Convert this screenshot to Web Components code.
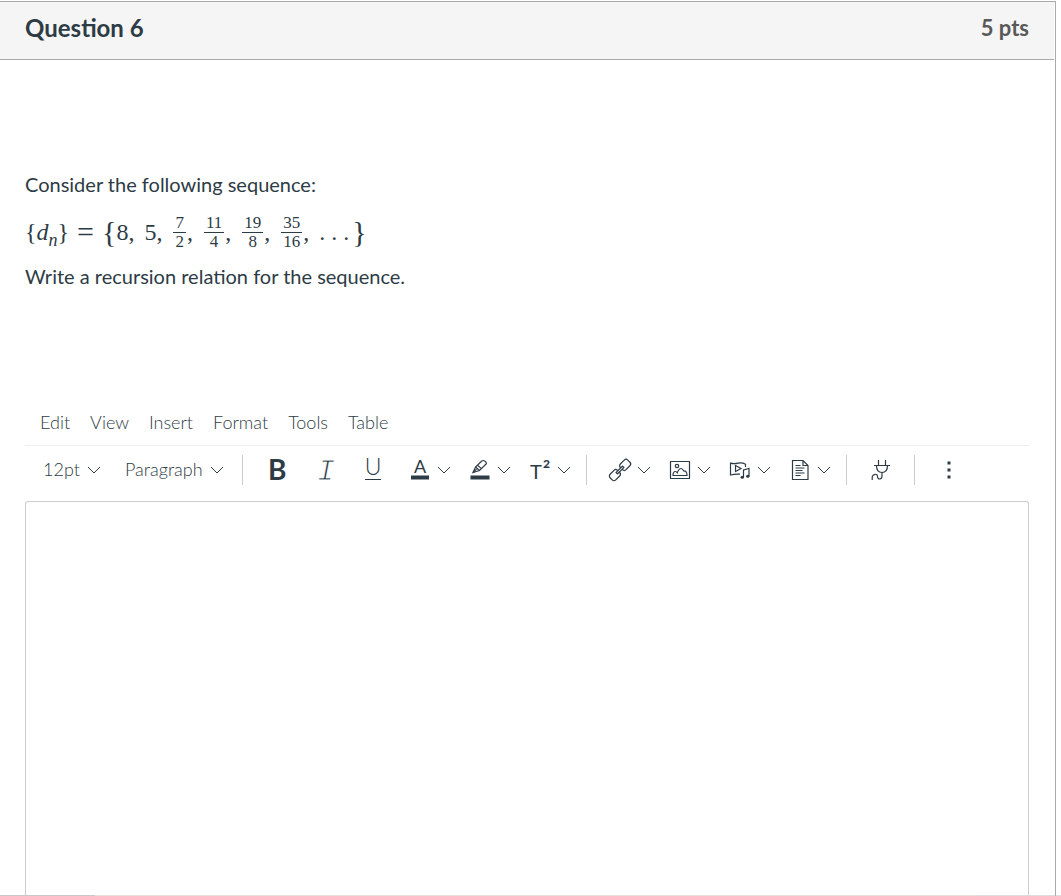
<!DOCTYPE html>
<html lang="en">
<head>
<meta charset="utf-8">
<meta name="viewport" content="width=device-width, initial-scale=1">
<title>Question 6</title>
<style>
  body {
    margin: 0;
    background: #fff;
    color: #2d3b45;
    font-family: Lato, "Liberation Sans", sans-serif;
    font-size: 20px;
    line-height: 30px;
  }
</style>
</head>
<body>
<quiz-question>
  <span slot="name">Question 6</span>
  <span slot="points">5 pts</span>
  <p slot="text">Consider the following sequence:</p>
  <math-sequence slot="text"></math-sequence>
  <p slot="text">Write a recursion relation for the sequence.</p>
  <rich-editor slot="answer"></rich-editor>
</quiz-question>

<script>
const icons = {
  bold: `<text x="1" y="20" font-size="28" font-weight="700">B</text>`,
  italic: `<text x="2" y="20" font-size="30" font-style="italic" font-family="Liberation Mono, monospace" stroke="#fff">I</text>`,
  underline: `<text x="10" y="15" font-size="23" font-weight="300" text-anchor="middle">U</text>
    <path d="M2 19.5h16" stroke="currentColor"/>`,
  color: `<text x="10" y="13" font-size="18" text-anchor="middle">A</text>
    <path d="M1 15.5h18v4H1z"/>`,
  highlight: `<path d="M0.5 15.5h19v4h-19z"/>
    <g class="line"><path d="M3 12.5l2.5-5.5 6-5.8q1.6-1.2 3.2-.3t1.700 2.800L9.500 10.500z"/>
    <path d="M5.500 7l4 3.500M7.500 5.200l4 3.400M3 12.500l3.500-3.300"/></g>`,
  superscript: `<text x="0" y="19" font-size="20">T</text>
    <text x="13" y="8" font-size="12" font-weight="900">2</text>`,
  link: `<g class="line" transform="rotate(-45 10 10)">
    <rect x="-2.500" y="6" width="10.500" height="8" rx="2.500"/>
    <rect x="12" y="6" width="10.500" height="8" rx="2.500"/>
    <path d="M5.500 9h9v2h-9z" fill="#fff"/></g>`,
  image: `<g class="line"><path d="M.5 1.500h19v17H.5z"/><circle cx="7" cy="6" r="1.700"/>
    <path d="M3 15.500q0-4 2.300-4 1.300 0 1.900 1.300 1.700-4.300 3.800-4.300 1.600 0 2.600 2.300 3.400-.2 3.400 4.700z"/></g>`,
  media: `<g class="line"><path d="M10 14.200q-5-.4-9.500.8V3.200q4 1 7.500 0 4-1 7.500 1V7"/>
    <path d="M5.500 5.500v6L11 8.500z"/><path d="M13.500 17V10l5.500-1.500V16"/></g>
    <ellipse cx="12.300" cy="17.300" rx="1.700" ry="1.500"/><ellipse cx="17.800" cy="16.300" rx="1.700" ry="1.500"/>`,
  document: `<g class="line"><path d="M2.500.5H13l5 5v14H2.500z"/><path d="M13 .5v5h5"/>
    <path d="M5.500 5.500h5M5.500 8h9M5.500 10.500h7M5.500 13h9M5.500 15.500h5"/></g>`,
  plug: `<g class="line"><path d="M7.500 0v5.500M14.500 0v5.500M3 5.500h16M5.500 5.500q0 7 5.500 7t5.500-7"/>
    <path d="M11 12.500V16q0 3-2.200 3T6.500 16.500 4 14.300t-2.800 2.500V20"/></g>`,
  more: `<path d="M8.500 1.500h3v3h-3zM8.500 8.500h3v3h-3zM8.500 15.500h3v3h-3z"/>`,
};

const chevron = `<svg class="chevron" width="14" height="8" viewBox="0 0 14 8" aria-hidden="true">
  <path d="M1 1l6 6 6-6" fill="none" stroke="currentColor"/></svg>`;

class QuizQuestion extends HTMLElement {
  constructor() {
    super();
    this.attachShadow({ mode: "open" });
    this.shadowRoot.innerHTML = `
      <style>
        :host {
          display: flex;
          flex-direction: column;
          box-sizing: border-box;
          height: 100vh;
          min-height: 700px;
          margin-right: 5px;
          padding: 1px 1px 0 0;
          position: relative;
        }

        /* outline of the card, closed on the top and right only */
        :host::before {
          content: "";
          position: absolute;
          inset: 1px 0 0 0;
          border: solid #aaa;
          border-width: 1px 1px 0 0;
          pointer-events: none;
        }

        footer {
          height: 1px;
          margin-right: -6px;
          background: linear-gradient(to right, #c8c8c8 9%, #e8e0da 9%, #e8e0da 92%, #ddd 92%);
        }

        header {
          display: flex;
          justify-content: space-between;
          align-items: center;
          box-sizing: border-box;
          height: 59px;
          margin-right: 1px;
          padding: 0 25px 4px;
          background: #f5f5f5;
          border-bottom: 1px solid #aaa;
        }

        h2, .points {
          margin: 0;
          font-size: 24px;
          font-weight: 700;
        }

        .points {
          font-size: 22px;
          color: #595959;
        }

        .text {
          display: flex;
          flex-direction: column;
          gap: 12px;
          padding: 109px 25px 107px;
        }

        ::slotted(p) {
          margin: 0;
        }

        .answer {
          flex: 1;
          display: flex;
          padding: 0 26px 0 25px;
        }
      </style>

      <header>
        <h2><slot name="name"></slot></h2>
        <div class="points"><slot name="points"></slot></div>
      </header>
      <div class="text"><slot name="text"></slot></div>
      <div class="answer"><slot name="answer"></slot></div>
      <footer></footer>
    `;
  }
}

customElements.define("quiz-question", QuizQuestion);

class MathFraction extends HTMLElement {
  constructor() {
    super();
    this.attachShadow({ mode: "open" });
    this.shadowRoot.innerHTML = `
      <style>
        :host {
          display: inline-flex;
          flex-direction: column;
          text-align: center;
          font-size: 17px;
          line-height: 18px;
          margin: 0 1px;
        }

        .top {
          padding: 0 2px;
          border-bottom: 1px solid currentColor;
        }
      </style>
      <span class="top"><slot name="top"></slot></span>
      <span><slot name="bottom"></slot></span>
    `;
  }
}

customElements.define("math-fraction", MathFraction);

class MathSequence extends HTMLElement {
  constructor() {
    super();
    this.attachShadow({ mode: "open" });
    const fractions = [[7, 2], [11, 4], [19, 8], [35, 16]];

    this.shadowRoot.innerHTML = `
      <style>
        :host {
          display: flex;
          align-items: center;
          height: 38px;
          padding-top: 2px;
          margin-bottom: -2px;
          font-family: "Liberation Serif", serif;
          font-size: 24px;
        }

        .equals {
          margin: 0 8px;
          font-size: 30px;
        }

        .brace {
          font-size: 30px;
        }

        .terms {
          display: flex;
          align-items: center;
          gap: 10px;
        }

        .term {
          display: flex;
          align-items: center;
        }

        .dots {
          margin-right: 3px;
        }

        sub {
          font-size: 18px;
          line-height: 0;
        }
      </style>
      <span>{<i>d<sub>n</sub></i>}</span>
      <span class="equals">=</span>
      <span class="brace">{</span>
      <span class="terms">
        <span class="term">8,</span>
        <span class="term">5,</span>
        ${fractions.map(([top, bottom]) => `
          <span class="term"><math-fraction><span slot="top">${top}</span><span slot="bottom">${bottom}</span></math-fraction>,</span>
        `).join("")}
        <span class="dots">. . .</span>
      </span>
      <span class="brace">}</span>
    `;
  }
}

customElements.define("math-sequence", MathSequence);

class ToolButton extends HTMLElement {
  connectedCallback() {
    const label = this.getAttribute("label");
    const split = this.hasAttribute("menu");

    this.attachShadow({ mode: "open" });
    this.shadowRoot.innerHTML = `
      <style>
        :host {
          display: block;
        }

        button {
          display: flex;
          align-items: center;
          justify-content: center;
          gap: 7px;
          width: 48px;
          height: 36px;
          padding: 0;
          border: 0;
          background: none;
          color: inherit;
          font: inherit;
          font-weight: 400;
          cursor: pointer;
        }

        :host([menu]) button {
          width: 60px;
          padding: 0 6px 0 13px;
        }

        svg {
          flex: none;
          overflow: visible;
          fill: currentColor;
        }

        .line {
          fill: none;
          stroke: currentColor;
          stroke-width: 1.2;
        }
      </style>
      <button type="button" aria-label="${label}" title="${label}">
        <svg width="20" height="20" viewBox="0 0 20 20" aria-hidden="true">${icons[this.getAttribute("icon")]}</svg>
        ${split ? chevron : ""}
      </button>
    `;
  }
}

customElements.define("tool-button", ToolButton);

class ToolSelect extends HTMLElement {
  connectedCallback() {
    const options = this.getAttribute("options").split(",");

    this.attachShadow({ mode: "open" });
    this.shadowRoot.innerHTML = `
      <style>
        :host {
          display: grid;
          align-items: center;
          width: 82px;
        }

        :host([wide]) {
          width: 123px;
        }

        select, .chevron {
          grid-area: 1 / 1;
        }

        select {
          appearance: none;
          width: 100%;
          height: 36px;
          margin: 0;
          padding: 0 22px 2px 18px;
          border: 0;
          background: none;
          color: inherit;
          font: inherit;
        }

        .chevron {
          justify-self: end;
          margin-right: 6px;
          pointer-events: none;
        }
      </style>
      <select aria-label="${this.getAttribute("label")}">
        ${options.map((option) => `<option>${option}</option>`).join("")}
      </select>
      ${chevron}
    `;
  }
}

customElements.define("tool-select", ToolSelect);

class RichEditor extends HTMLElement {
  constructor() {
    super();
    this.attachShadow({ mode: "open" });
    const menus = ["Edit", "View", "Insert", "Format", "Tools", "Table"];

    this.shadowRoot.innerHTML = `
      <style>
        :host {
          flex: 1;
          display: flex;
          flex-direction: column;
          font-size: 18px;
          font-weight: 300;
          line-height: 24px;
        }

        .menubar {
          display: flex;
          gap: 20px;
          height: 47px;
          padding: 0 15px;
          border-bottom: 1px solid #eee;
        }

        .menubar button {
          padding: 0;
          border: 0;
          background: none;
          color: inherit;
          font: inherit;
          cursor: pointer;
        }

        .toolbar, .group {
          display: flex;
          align-items: center;
        }

        .toolbar {
          height: 48px;
          margin-bottom: 7px;
        }

        .fonts {
          margin-right: 3px;
        }

        hr {
          width: 1px;
          height: 30px;
          margin: 0 10px 0 9px;
          border: 0;
          background: #c7cdd1;
        }

        textarea {
          flex: 1;
          box-sizing: border-box;
          width: 100%;
          padding: 12px;
          border: 1px solid #c7cdd1;
          border-bottom: 0;
          border-radius: 3px 3px 0 0;
          outline: 0;
          resize: none;
          color: inherit;
          font: inherit;
        }
      </style>

      <div class="menubar">
        ${menus.map((menu) => `<button type="button">${menu}</button>`).join("")}
      </div>
      <div class="toolbar">
        <div class="group fonts">
          <tool-select label="Font size" options="12pt,14pt,18pt,24pt"></tool-select>
          <tool-select wide label="Block style" options="Paragraph,Heading 2,Heading 3"></tool-select>
        </div>
        <hr>
        <div class="group">
          <tool-button icon="bold" label="Bold"></tool-button>
          <tool-button icon="italic" label="Italic"></tool-button>
          <tool-button icon="underline" label="Underline"></tool-button>
          <tool-button menu icon="color" label="Text color"></tool-button>
          <tool-button menu icon="highlight" label="Background color"></tool-button>
          <tool-button menu icon="superscript" label="Superscript"></tool-button>
        </div>
        <hr>
        <div class="group">
          <tool-button menu icon="link" label="Links"></tool-button>
          <tool-button menu icon="image" label="Images"></tool-button>
          <tool-button menu icon="media" label="Media"></tool-button>
          <tool-button menu icon="document" label="Documents"></tool-button>
        </div>
        <hr>
        <tool-button icon="plug" label="Apps"></tool-button>
        <hr>
        <tool-button icon="more" label="More"></tool-button>
      </div>
      <textarea aria-label="Answer"></textarea>
    `;
  }
}

customElements.define("rich-editor", RichEditor);
</script>
</body>
</html>
